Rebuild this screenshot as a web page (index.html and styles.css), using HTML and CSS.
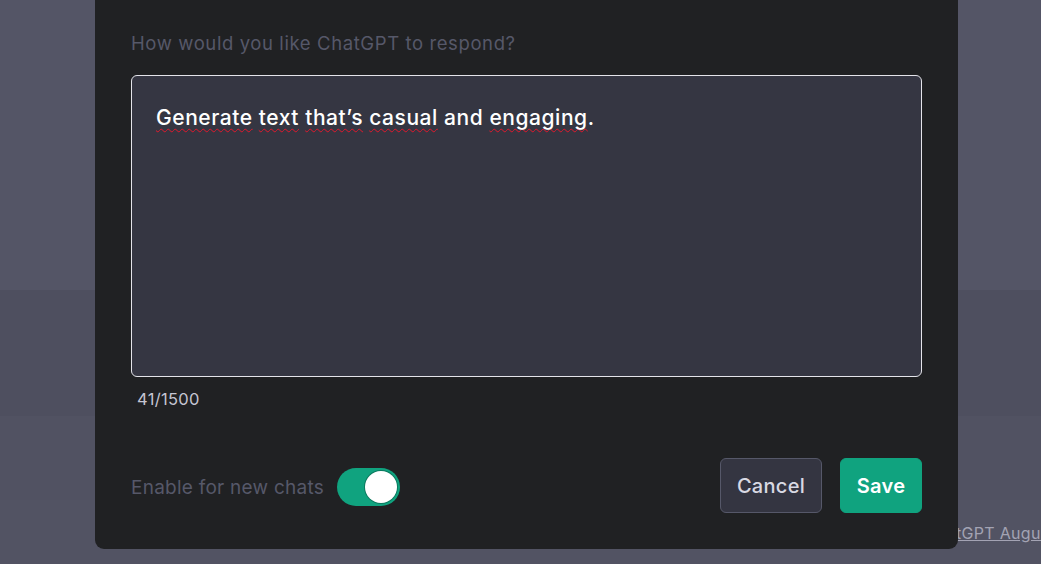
FILE: index.html
```html
<!DOCTYPE html>
<html lang="en">
<head>
<meta charset="utf-8">
<title>Custom instructions</title>
<link rel="stylesheet" href="styles.css">
</head>
<body>
<div class="page">
  <div class="band band-top"></div>
  <div class="band band-mid"></div>
  <div class="band band-low"></div>
  <div class="band band-foot"><a class="foot-link">ChatGPT August 3 Version</a></div>
</div>
<div class="modal">
  <div class="label">How would you like ChatGPT to respond?</div>
  <div class="textarea"><span class="sp">Generate</span> <span class="sp">text</span> <span class="sp">that’s</span> <span class="sp">casual</span> and <span class="sp">engaging</span>.</div>
  <div class="counter">41/1500</div>
  <div class="footer">
    <div class="enable">
      <span class="enable-label">Enable for new chats</span>
      <span class="toggle"><span class="knob"></span></span>
    </div>
    <div class="actions">
      <button class="btn btn-cancel">Cancel</button>
      <button class="btn btn-save">Save</button>
    </div>
  </div>
</div>
</body>
</html>
```
FILE: styles.css
```css
* { box-sizing: border-box; }
html, body { margin: 0; padding: 0; }
body {
  width: 1041px;
  height: 564px;
  overflow: hidden;
  font-family: "Inter", "Liberation Sans", sans-serif;
  background: #525363;
}
.page { display: flex; flex-direction: column; }
.band-top { height: 290px; background: #545566; }
.band-mid { height: 126px; background: #4e4f5f; }
.band-low { height: 84px; background: #515262; }
.band-foot {
  height: 64px;
  background: #525363;
  padding-left: 925px;
  padding-top: 22px;
  white-space: nowrap;
  overflow: hidden;
}
.foot-link {
  font-size: 16px;
  line-height: 22px;
  letter-spacing: 0.3px;
  color: #a3a3b3;
  text-decoration: underline;
}
.modal {
  position: absolute;
  left: 95px;
  top: 0;
  width: 863px;
  height: 549px;
  background: #202123;
  border-radius: 0 0 9px 9px;
  padding: 29px 36px 36px;
  display: flex;
  flex-direction: column;
}
.label {
  font-size: 18.5px;
  line-height: 28px;
  letter-spacing: 0.6px;
  color: #565869;
}
.textarea {
  margin-top: 18px;
  height: 302px;
  background: #353642;
  border: 1px solid #e4e4ea;
  border-radius: 6px;
  padding: 28px 24px;
  font-size: 21px;
  line-height: 28px;
  letter-spacing: 0.55px;
  font-weight: 500;
  color: #ffffff;
}
.sp {
  text-decoration: underline wavy #e0182c;
  text-decoration-thickness: 1.25px;
  text-decoration-skip-ink: none;
  text-underline-offset: 3px;
}
.counter {
  margin-top: 10px;
  padding-left: 6px;
  font-size: 16.5px;
  line-height: 24px;
  letter-spacing: 0.3px;
  color: #c5c5d2;
}
.footer {
  margin-top: 47px;
  height: 55px;
  display: flex;
  align-items: center;
  justify-content: space-between;
}
.enable { display: flex; align-items: center; gap: 13px; padding-top: 3px; }
.enable-label {
  font-size: 19px;
  letter-spacing: 0.25px;
  color: #565869;
}
.toggle {
  width: 63px;
  height: 38px;
  border-radius: 19px;
  background: #10a37f;
  display: flex;
  align-items: center;
  justify-content: flex-end;
  padding-right: 3px;
}
.knob {
  width: 32px;
  height: 32px;
  border-radius: 50%;
  background: #ffffff;
  box-shadow: 0 0 0 1px #0b7a5f;
}
.actions { display: flex; gap: 18px; }
.btn {
  height: 55px;
  border-radius: 6px;
  font-family: inherit;
  font-size: 20px;
  font-weight: 500;
  letter-spacing: 0.3px;
  padding: 0;
  cursor: pointer;
}
.btn-cancel {
  width: 102px;
  background: #343541;
  border: 1px solid #565869;
  color: #d9d9e3;
}
.btn-save {
  width: 82px;
  background: #10a37f;
  border: 1px solid #10a37f;
  color: #ffffff;
  font-weight: 600;
}
```
